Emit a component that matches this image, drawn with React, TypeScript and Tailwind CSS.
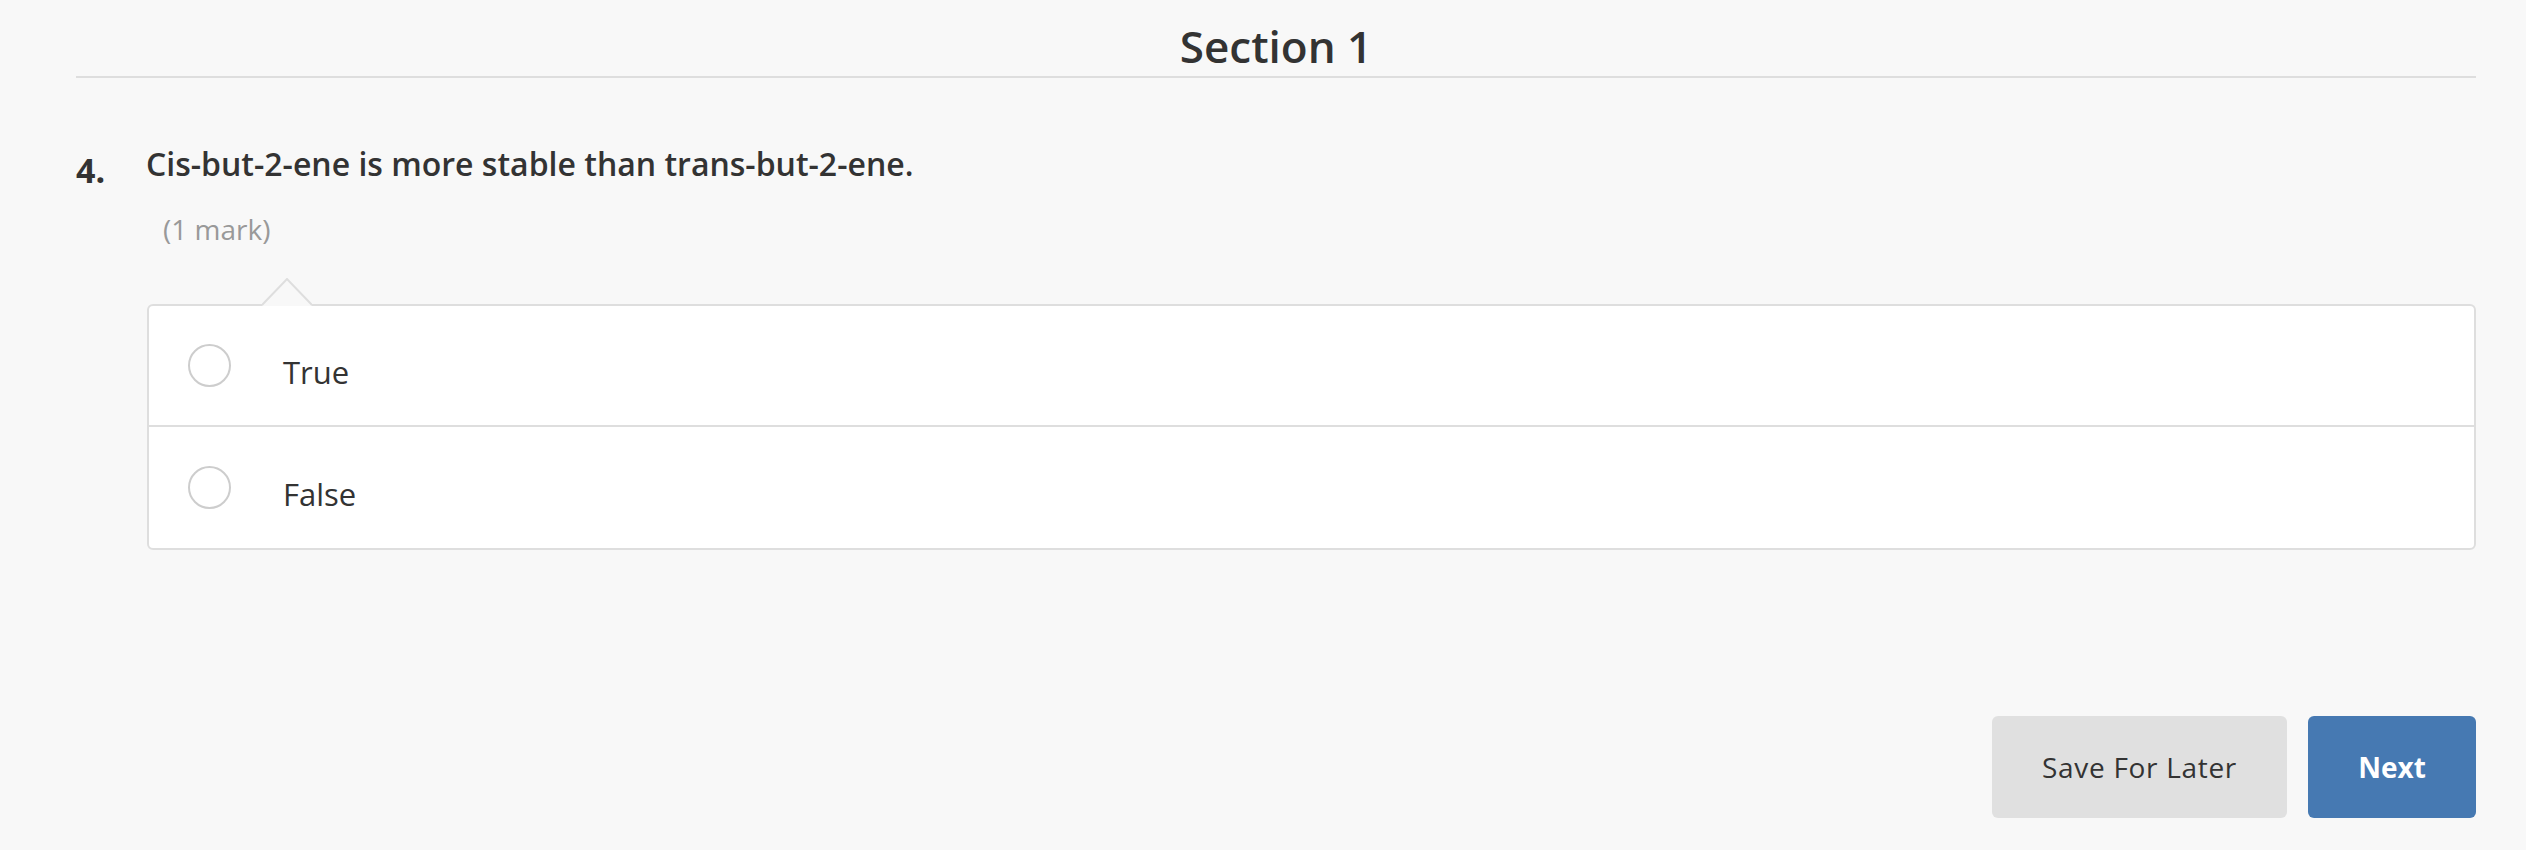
const OPTIONS = ['True', 'False']

// Радио-кнопка без выбора: просто серый круг.
const Radio = () => (
  <span className="block h-[43px] w-[43px] shrink-0 rounded-full border-2 border-[#cdcdcd] bg-white" />
)

// Уголок над карточкой вариантов (указывает на «(1 mark)»).
const Notch = () => (
  <svg
    className="absolute left-[113px] top-[-28px]"
    width="50"
    height="28"
    viewBox="0 0 50 28"
  >
    <path d="M0 28 L1 26 L25 1 L49 26 L50 28 Z" fill="#f8f8f8" />
    <path d="M0 27 L25 1 L50 27" fill="none" stroke="#dedede" strokeWidth="2" />
  </svg>
)

export default function App() {
  return (
    <div className="min-h-screen bg-[#f8f8f8] pl-[76px] pr-[50px] font-['Open_Sans',sans-serif] text-[#333333]">
      <header className="border-b-2 border-[#dedede] pt-[16px]">
        <h1 className="text-center text-[44px] font-semibold leading-[60px]">
          Section 1
        </h1>
      </header>

      <section className="pt-[66px]">
        <div className="flex items-start">
          <span className="mt-[6px] w-[70px] shrink-0 text-[34px] font-bold leading-[40px]">
            4.
          </span>
          <p className="text-[32px] font-semibold leading-[40px]">
            Cis-but-2-ene is more stable than trans-but-2-ene.
          </p>
        </div>
        <p className="mt-[21px] pl-[87px] text-[28px] leading-[36px] text-[#999999]">
          (1 mark)
        </p>

        <div className="ml-[71px] mt-[57px]">
          <div className="relative rounded-[6px] border-2 border-[#dedede] bg-white">
            <Notch />
            {OPTIONS.map((label, i) => (
              <label
                key={label}
                className={`flex h-[121px] cursor-pointer items-center pl-[39px] ${
                  i < OPTIONS.length - 1 ? 'border-b-2 border-[#dedede]' : ''
                }`}
              >
                <Radio />
                <span className="ml-[52px] mt-[12px] text-[31px] leading-[40px]">
                  {label}
                </span>
              </label>
            ))}
          </div>
        </div>
      </section>

      <footer className="mt-[166px] flex justify-end gap-[21px]">
        <button className="h-[102px] w-[295px] rounded-[6px] bg-[#e0e0e0] text-[28px] tracking-[0.7px] text-[#333333]">
          Save For Later
        </button>
        <button className="h-[102px] w-[168px] rounded-[6px] bg-[#4679b2] text-[28px] font-bold text-white">
          Next
        </button>
      </footer>
    </div>
  )
}
